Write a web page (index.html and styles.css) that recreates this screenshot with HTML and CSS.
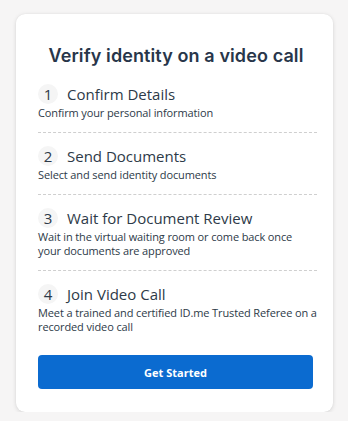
FILE: index.html
```html
<!DOCTYPE html>
<html lang="en">
<head>
<meta charset="utf-8">
<title>Verify identity on a video call</title>
<link rel="stylesheet" href="styles.css">
</head>
<body>
<main class="card">
  <h1 class="title">Verify identity on a video call</h1>
  <ol class="steps">
    <li class="step">
      <div class="step-head"><span class="num">1</span><span class="step-title">Confirm Details</span></div>
      <p class="step-desc">Confirm your personal information</p>
    </li>
    <li class="step">
      <div class="step-head"><span class="num">2</span><span class="step-title">Send Documents</span></div>
      <p class="step-desc">Select and send identity documents</p>
    </li>
    <li class="step">
      <div class="step-head"><span class="num">3</span><span class="step-title">Wait for Document Review</span></div>
      <p class="step-desc">Wait in the virtual waiting room or come back once your documents are approved</p>
    </li>
    <li class="step">
      <div class="step-head"><span class="num">4</span><span class="step-title">Join Video Call</span></div>
      <p class="step-desc">Meet a trained and certified ID.me Trusted Referee on a recorded video call</p>
    </li>
  </ol>
  <button class="btn" type="button">Get Started</button>
</main>
</body>
</html>
```
FILE: styles.css
```css
* { box-sizing: border-box; }
html, body { margin: 0; padding: 0; }
body {
  background: #f6f5f5;
  font-family: "Open Sans", "Liberation Sans", sans-serif;
  color: #2d3a48;
  padding: 14px 15px 0 16px;
}
.card {
  background: #fff;
  border-radius: 9px;
  box-shadow: 0 1px 4px rgba(0,0,0,0.13), 0 0 1px rgba(0,0,0,0.08);
  height: 398px;
  padding: 30px 16px 0 22px;
}
.title {
  margin: 0 0 3px;
  padding-right: 3px;
  font-family: Inter, "Noto Sans", sans-serif;
  font-weight: 600;
  font-size: 18px;
  line-height: 24px;
  text-align: center;
  color: #28364a;
  letter-spacing: 0.1px;
}
.steps { list-style: none; margin: 0; padding: 0; }
.step {
  padding: 13px 0 12px;
  border-bottom: 1px dashed #cfcfcf;
}
.step:last-child { border-bottom: none; }
.step-head {
  display: flex;
  align-items: center;
  gap: 9px;
  height: 20px;
}
.num {
  width: 20px;
  height: 20px;
  border-radius: 50%;
  background: #f5f5f5;
  display: flex;
  align-items: center;
  justify-content: center;
  font-size: 15px;
  line-height: 20px;
}
.step-title {
  font-size: 15px;
  line-height: 20px;
}
.step-desc {
  margin: 2px 0 0;
  font-size: 11px;
  line-height: 14px;
  letter-spacing: -0.12px;
}
.btn {
  display: block;
  width: calc(100% - 4px);
  height: 34px;
  margin-top: 9px;
  border: none;
  border-radius: 4px;
  background: #0b6bd0;
  color: #fff;
  font-family: "Open Sans", "Liberation Sans", sans-serif;
  font-weight: 700;
  font-size: 11px;
}
```
